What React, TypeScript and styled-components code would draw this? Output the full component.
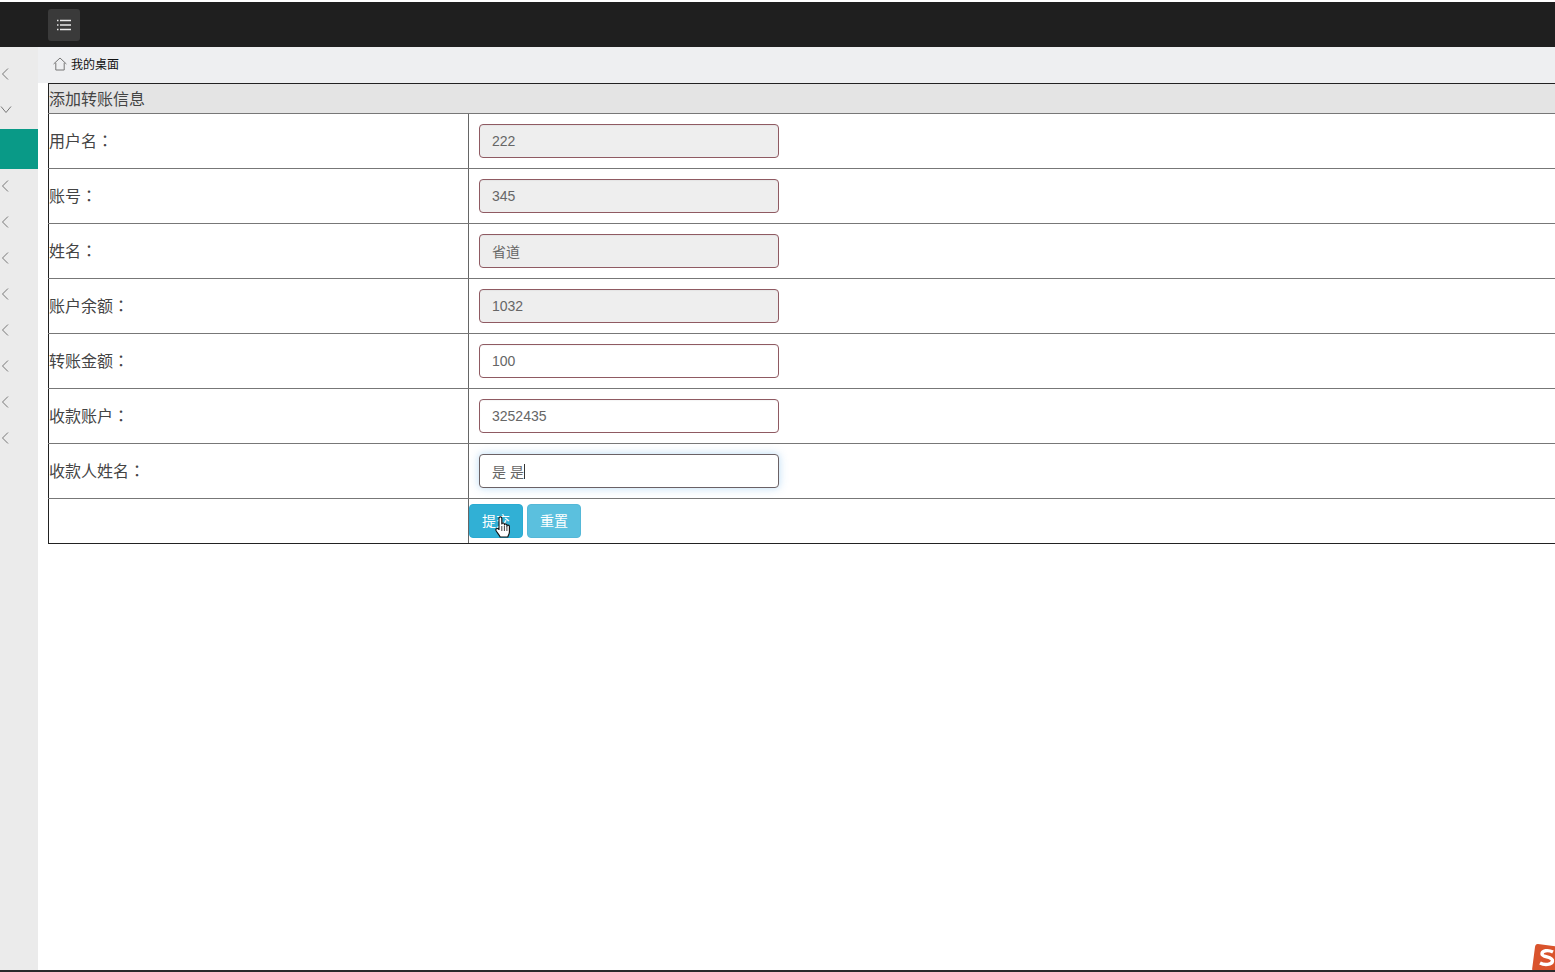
import React from "react";
import styled, { createGlobalStyle } from "styled-components";

const GlobalStyle = createGlobalStyle`
    html, body {
        margin: 0;
        padding: 0;
        height: 100%;
        overflow: hidden;
        background: #ffffff;
        font-family: "Liberation Sans", "Noto Sans CJK SC", sans-serif;
    }
`
const Page = styled.div`
    position: relative;
    display: flex;
    flex-direction: column;
    width: 1555px;
    height: 972px;
    padding-top: 2px;
    box-sizing: border-box;
    overflow: hidden;
    border-bottom: 2px solid #2a2a2a;
`
const TopBar = styled.header`
    flex: 0 0 45px;
    display: flex;
    align-items: center;
    padding-left: 48px;
    background: #1f1f1f;
`
const MenuButton = styled.div`
    width: 32px;
    height: 32px;
    display: flex;
    align-items: center;
    justify-content: center;
    border-radius: 3px;
    background: #3a3a3a;
`
const Body = styled.div`
    flex: 1;
    display: flex;
    min-height: 0;
`
const Sidebar = styled.nav`
    flex: 0 0 38px;
    padding-top: 9px;
    box-sizing: border-box;
    background: #ebebeb;
`
const SideItem = styled.div<{ $active?: boolean }>`
    display: flex;
    align-items: center;
    height: ${p => (p.$active ? "40px" : "36px")};
    margin-top: ${p => (p.$active ? "1px" : "0")};
    margin-bottom: ${p => (p.$active ? "-1px" : "0")};
    background: ${p => (p.$active ? "#099a87" : "transparent")};
`
const Main = styled.main`
    flex: 1;
    min-width: 0;
    overflow: hidden;
`
const Breadcrumb = styled.div`
    height: 36px;
    display: flex;
    align-items: center;
    gap: 4px;
    padding: 0 0 3px 15px;
    box-sizing: border-box;
    background: #eeeff1;
    font-size: 12px;
    color: #111;
`
const Content = styled.div`
    padding-left: 10px;
`
const FormTable = styled.table`
    width: 1540px;
    table-layout: fixed;
    border-collapse: collapse;
    font-size: 16px;
    color: #444;
`
const LabelColumn = styled.col`
    width: 420px;
`
const TitleCell = styled.th`
    height: 27px;
    padding: 0 0 2px;
    text-align: left;
    font-weight: 400;
    background: #e4e4e4;
    border-top: 1px solid #222;
    border-left: 1px solid #222;
    border-bottom: 1px solid #777;
`
const LabelCell = styled.td<{ $last?: boolean }>`
    height: ${p => (p.$last ? "42px" : "52px")};
    padding: 0 0 2px;
    border-left: 1px solid #222;
    border-right: 1px solid #666;
    border-bottom: 1px solid ${p => (p.$last ? "#222" : "#777")};
`
const Colon = styled.span`
    font-family: "Noto Sans CJK TC", sans-serif;
`
const FieldCell = styled.td<{ $last?: boolean }>`
    padding: 0 0 0 10px;
    border-bottom: 1px solid ${p => (p.$last ? "#222" : "#777")};
`
const ButtonCell = styled(FieldCell)`
    padding-left: 0;
`
const InputWrap = styled.div`
    position: relative;
    width: 300px;
`
const Input = styled.input<{ $focused?: boolean }>`
    display: block;
    width: 300px;
    height: 34px;
    padding: 0 12px;
    box-sizing: border-box;
    border: 1px solid ${p => (p.$focused ? "#6b6165" : "#8f5a62")};
    border-radius: 4px;
    outline: none;
    font: 14px "Liberation Sans", "Noto Sans CJK SC", sans-serif;
    color: #666;
    background: ${p => (p.readOnly && !p.$focused ? "#eeeeee" : "#ffffff")};
    box-shadow: ${p => (p.$focused ? "0 0 8px rgba(102, 175, 233, .45)" : "inset 0 1px 1px rgba(0, 0, 0, .04)")};
`
const Caret = styled.span`
    position: absolute;
    left: 45px;
    top: 10px;
    width: 1px;
    height: 15px;
    background: #333;
`
const Buttons = styled.div`
    display: flex;
    gap: 4px;
`
const Button = styled.button<{ $primary?: boolean }>`
    width: 54px;
    height: 34px;
    padding: 0 0 2px;
    border: 1px solid ${p => (p.$primary ? "#2aabd2" : "#55b8d8")};
    border-radius: 4px;
    font: 14px "Liberation Sans", "Noto Sans CJK SC", sans-serif;
    color: #fff;
    background: ${p => (p.$primary ? "#31b0d5" : "#5bc0de")};
`
const Pointer = styled.svg`
    position: absolute;
    left: 494px;
    top: 515px;
`
const Badge = styled.svg`
    position: absolute;
    right: -9px;
    bottom: -6px;
`

const Chevron = ({ down }: { down?: boolean }) =>
    down ? (
        <svg width="12" height="10" viewBox="0 0 12 10" fill="none" stroke="#777" strokeWidth="1">
            <path d="M1 1.5l5 6 5-6" />
        </svg>
    ) : (
        <svg width="10" height="14" viewBox="0 0 10 14" fill="none" stroke="#777" strokeWidth="1">
            <path d="M8 1.5L2.5 7l5.5 5.5" />
        </svg>
    )

const fields = [
    { label: "用户名", value: "222", locked: true },
    { label: "账号", value: "345", locked: true },
    { label: "姓名", value: "省道", locked: true },
    { label: "账户余额", value: "1032", locked: true },
    { label: "转账金额", value: "100" },
    { label: "收款账户", value: "3252435" },
]

export default function App() {
    return (
        <Page>
            <GlobalStyle />
            <TopBar>
                <MenuButton>
                    <svg width="16" height="12" viewBox="0 0 16 12" stroke="#e8e8e8" strokeWidth="1.3">
                        <path d="M1 1.5h1.5M4 1.5h11M1 6h1.5M4 6h11M1 10.5h1.5M4 10.5h11" />
                    </svg>
                </MenuButton>
            </TopBar>
            <Body>
                <Sidebar>
                    <SideItem><Chevron /></SideItem>
                    <SideItem><Chevron down /></SideItem>
                    <SideItem $active />
                    {[0, 1, 2, 3, 4, 5, 6, 7].map(i => (
                        <SideItem key={i}><Chevron /></SideItem>
                    ))}
                </Sidebar>
                <Main>
                    <Breadcrumb>
                        <svg width="14" height="14" viewBox="0 0 14 14" fill="none" stroke="#777" strokeWidth="1">
                            <path d="M.6 7L7 1l6.4 6M2.8 5.8V13h8.4V5.8" />
                        </svg>
                        我的桌面
                    </Breadcrumb>
                    <Content>
                        <FormTable>
                            <colgroup>
                                <LabelColumn />
                                <col />
                            </colgroup>
                            <thead>
                                <tr><TitleCell colSpan={2}>添加转账信息</TitleCell></tr>
                            </thead>
                            <tbody>
                                {fields.map(f => (
                                    <tr key={f.label}>
                                        <LabelCell>{f.label}<Colon>：</Colon></LabelCell>
                                        <FieldCell>
                                            <Input value={f.value} readOnly={f.locked} onChange={() => {}} />
                                        </FieldCell>
                                    </tr>
                                ))}
                                <tr>
                                    <LabelCell>收款人姓名<Colon>：</Colon></LabelCell>
                                    <FieldCell>
                                        <InputWrap>
                                            <Input $focused value="是 是" readOnly />
                                            <Caret />
                                        </InputWrap>
                                    </FieldCell>
                                </tr>
                                <tr>
                                    <LabelCell $last />
                                    <ButtonCell $last>
                                        <Buttons>
                                            <Button $primary>提交</Button>
                                            <Button>重置</Button>
                                        </Buttons>
                                    </ButtonCell>
                                </tr>
                            </tbody>
                        </FormTable>
                    </Content>
                </Main>
            </Body>
            <Pointer width="18" height="24" viewBox="0 0 18 24">
                <path d="M5 11V3.2c0-1.8 2.8-1.8 2.8 0V9c0-1.4 2.6-1.4 2.6 0v1c0-1.3 2.5-1.3 2.5 0v1c0-1.2 2.5-1.2 2.5.2V17c0 2-1 3-1.6 5H6.2c-.8-2-2.4-3.6-4-6-1.3-2 .8-3.6 2.8-1.5z" fill="#fff" stroke="#111" strokeWidth="1.1" strokeLinejoin="round" />
                <path d="M7.8 11v5M10.4 11v5M12.9 11v5" stroke="#111" strokeWidth=".8" />
            </Pointer>
            <Badge width="32" height="34" viewBox="0 0 32 34">
                <path d="M6 2l22 3c2 .3 3 1.5 2.8 3.5L28 30c-.3 2-1.5 3-3.5 2.8L3 30c-2-.3-3-1.5-2.8-3.5L3 5c.3-2 1.5-3.3 3-3z" fill="#d9532c" />
                <path d="M21 10c-5-2.5-11-1.5-11 2s11 2.5 10.5 7c-.5 4-8 4.5-12.5 2" fill="none" stroke="#fff" strokeWidth="3.4" />
            </Badge>
        </Page>
    )
}
